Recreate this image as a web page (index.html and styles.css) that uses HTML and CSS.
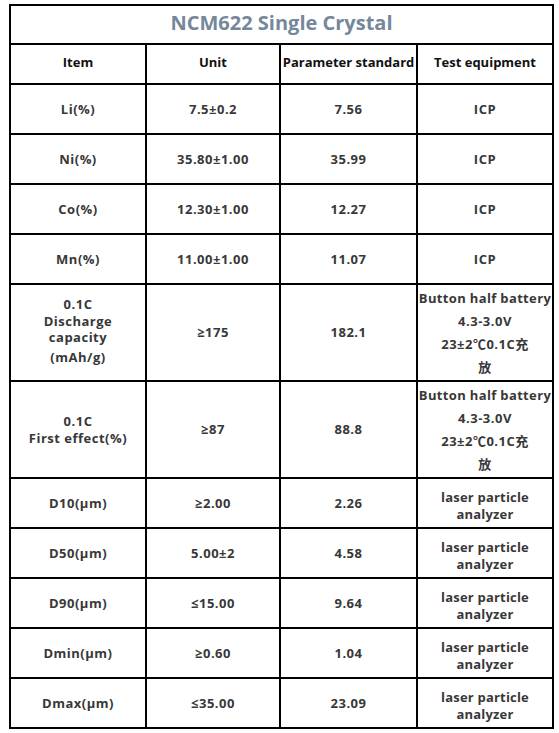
FILE: index.html
```html
<!DOCTYPE html>
<html lang="en">
<head>
<meta charset="utf-8">
<title>NCM622 Single Crystal</title>
<link rel="stylesheet" href="styles.css">
</head>
<body>
<table class="spec">
  <colgroup>
    <col class="c1"><col class="c2"><col class="c3"><col class="c4">
  </colgroup>
  <tr class="r-title"><td colspan="4" class="title">NCM622 Single Crystal</td></tr>
  <tr class="r-head">
    <th>Item</th><th>Unit</th><th class="tight">Parameter standard</th><th>Test equipment</th>
  </tr>
  <tr class="r-50"><td>Li(%)</td><td>7.5±0.2</td><td>7.56</td><td>ICP</td></tr>
  <tr class="r-50"><td>Ni(%)</td><td>35.80±1.00</td><td>35.99</td><td>ICP</td></tr>
  <tr class="r-50"><td>Co(%)</td><td>12.30±1.00</td><td>12.27</td><td>ICP</td></tr>
  <tr class="r-50"><td>Mn(%)</td><td>11.00±1.00</td><td>11.07</td><td>ICP</td></tr>
  <tr class="r-97">
    <td>
      <div class="ln">0.1C</div>
      <div class="ln">Discharge</div>
      <div class="ln">capacity</div>
      <div class="ln wide">(mAh/g)</div>
    </td>
    <td>≥175</td>
    <td>182.1</td>
    <td class="tight">
      <div class="ln wide nw spaced">Button half battery</div>
      <div class="ln wide">4.3-3.0V</div>
      <div class="ln wide">23±2℃0.1C充</div>
      <div class="ln wide">放</div>
    </td>
  </tr>
  <tr class="r-97">
    <td>
      <div class="ln">0.1C</div>
      <div class="ln">First effect(%)</div>
    </td>
    <td>≥87</td>
    <td>88.8</td>
    <td class="tight">
      <div class="ln wide nw spaced">Button half battery</div>
      <div class="ln wide">4.3-3.0V</div>
      <div class="ln wide">23±2℃0.1C充</div>
      <div class="ln wide">放</div>
    </td>
  </tr>
  <tr class="r-50"><td>D10(μm)</td><td>≥2.00</td><td>2.26</td><td class="low"><div class="ln">laser particle</div><div class="ln">analyzer</div></td></tr>
  <tr class="r-50"><td>D50(μm)</td><td>5.00±2</td><td>4.58</td><td class="low"><div class="ln">laser particle</div><div class="ln">analyzer</div></td></tr>
  <tr class="r-50"><td>D90(μm)</td><td>≤15.00</td><td>9.64</td><td class="low"><div class="ln">laser particle</div><div class="ln">analyzer</div></td></tr>
  <tr class="r-50"><td>Dmin(μm)</td><td>≥0.60</td><td>1.04</td><td class="low"><div class="ln">laser particle</div><div class="ln">analyzer</div></td></tr>
  <tr class="r-50"><td>Dmax(μm)</td><td>≤35.00</td><td>23.09</td><td class="low"><div class="ln">laser particle</div><div class="ln">analyzer</div></td></tr>
</table>
</body>
</html>
```

FILE: styles.css
```css
html, body {
  margin: 0;
  padding: 0;
  background: #ffffff;
}

body {
  padding: 4px 0 0 9px;
  font-family: "Open Sans", "Noto Sans CJK SC", sans-serif;
  font-weight: 700;
  font-size: 13px;
  color: #383838;
}

.spec {
  border-collapse: collapse;
  table-layout: fixed;
  width: 545px;
  border: 2px solid #000;
}

.c1 { width: 136px; }
.c2 { width: 134px; }
.c3 { width: 137px; }
.c4 { width: 136px; }

.spec td,
.spec th {
  border: 2px solid #000;
  padding: 0;
  text-align: center;
  vertical-align: middle;
  font-weight: 700;
  line-height: 17px;
}

.spec td {
  letter-spacing: 0.5px;
}

.spec th {
  color: #111;
}

.title {
  font-size: 20px;
  color: #76879b;
  line-height: 26px;
  letter-spacing: 0 !important;
  padding-bottom: 5px !important;
}

.r-title { height: 39px; }
.r-head { height: 40px; }
.r-50 { height: 50px; }
.r-97 { height: 97px; }

.r-head th { padding-bottom: 3px; }

.tight { padding: 0; }

.ln { line-height: 16.6px; }
.ln.wide { line-height: 23px; }
.nw { white-space: nowrap; }
.spaced { letter-spacing: 0.35px; }

.low { padding-top: 5px !important; letter-spacing: 0.2px !important; }
```
